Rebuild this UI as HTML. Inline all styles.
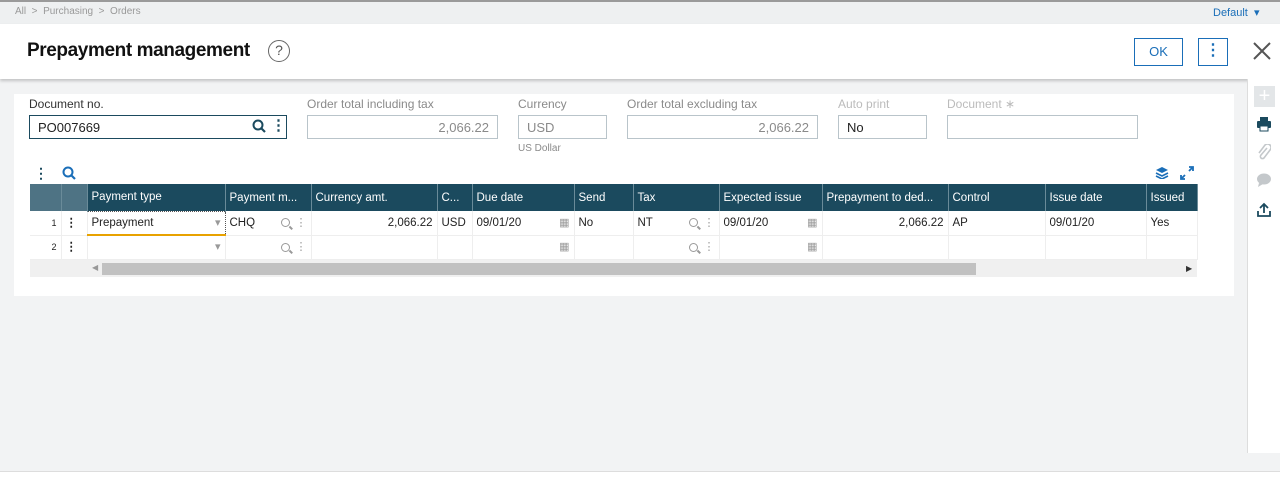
<!DOCTYPE html>
<html><head><style>
*{box-sizing:border-box;margin:0;padding:0}
body{width:1280px;height:484px;background:#f2f3f4;font-family:"Liberation Sans",sans-serif;position:relative;overflow:hidden;color:#222}
.a{position:absolute}
.lbl{font-size:12px;color:#333}
.dim{color:#8a8a8a}
.inp{border:1px solid #b9c4ca;background:#fff;height:24px;font-size:13px;padding:4px 8px}
table{border-collapse:collapse;table-layout:fixed;font-size:11.5px}
th{background:#1b4a5e;color:#fff;font-weight:normal;text-align:left;padding:0 4px;height:27px;border-right:1px solid #6a8b99;white-space:nowrap;overflow:hidden}
td{height:24px;line-height:22px;padding:0 4px;border-right:1px solid #eee;border-bottom:1px solid #eee;white-space:nowrap;background:#fff;vertical-align:middle}
.g{color:#999;float:right;font-size:11px}
.mg{display:inline-block;width:9px;height:9px;border:1.5px solid #999;border-radius:50%;position:relative;vertical-align:middle;margin-right:6px}
.mg:after{content:"";position:absolute;width:4px;height:1.5px;background:#999;right:-4px;bottom:-2px;transform:rotate(45deg)}
</style></head><body>
<div class="a" style="left:0;top:0;width:1280px;height:2px;background:#9a9a9a"></div>
<div class="a" style="left:0;top:2px;width:1280px;height:22px;background:#eef0f1"></div>
<div class="a" style="left:15px;top:6px;font-size:10px;color:#999">All &nbsp;&gt;&nbsp; Purchasing &nbsp;&gt;&nbsp; Orders</div>
<div class="a" style="left:1213px;top:6px;font-size:11px;color:#1a6eb8">Default &nbsp;▾</div>
<div class="a" style="left:0;top:24px;width:1280px;height:55px;background:#fff;box-shadow:0 2px 3px rgba(0,0,0,.2)"></div>
<div class="a" style="left:27px;top:40px;font-size:19px;font-weight:bold;color:#111;letter-spacing:-.4px">Prepayment management</div>
<div class="a" style="left:268px;top:40px;width:22px;height:22px;border:1.5px solid #666;border-radius:50%;font-size:14px;text-align:center;line-height:19px;color:#555">?</div>
<div class="a" style="left:1134px;top:38px;width:49px;height:28px;border:1.5px solid #1a6eb8;color:#1a6eb8;font-size:13px;text-align:center;line-height:25px">OK</div>
<div class="a" style="left:1198px;top:38px;width:30px;height:28px;border:1.5px solid #1a6eb8;color:#1a6eb8;font-size:16px;font-weight:bold;text-align:center;line-height:24px">⋮</div>
<svg class="a" style="left:1253px;top:42px" width="18" height="18"><path d="M1 1L17 17M17 1L1 17" stroke="#555" stroke-width="2"/></svg>
<div class="a" style="left:1247px;top:79px;width:33px;height:374px;background:#fff;border-left:1px solid #ddd"></div>
<div class="a" style="left:1254px;top:86px;width:21px;height:21px;background:#e3e6e8;color:#fff;font-size:20px;text-align:center;line-height:20px">+</div>
<svg class="a" style="left:1256px;top:116px" width="16" height="16"><rect x="4" y="1" width="8" height="4" fill="#1b4a5e"/><rect x="1" y="5" width="14" height="7" rx="1" fill="#1b4a5e"/><rect x="4" y="10" width="8" height="5" fill="#fff" stroke="#1b4a5e"/></svg>
<svg class="a" style="left:1257px;top:144px" width="14" height="16"><path d="M10 4L4 11a2 2 0 0 0 3 3l6-8a3.5 3.5 0 0 0-5-5L2 9" stroke="#c4c8cb" stroke-width="1.6" fill="none"/></svg>
<svg class="a" style="left:1256px;top:173px" width="16" height="14"><ellipse cx="8" cy="6" rx="7" ry="5.5" fill="#c4c8cb"/><path d="M3 10L2 14L7 11z" fill="#c4c8cb"/></svg>
<svg class="a" style="left:1256px;top:202px" width="16" height="16"><path d="M8 2V11M4 6L8 2L12 6M2 9V14H14V9" stroke="#1b4a5e" stroke-width="1.8" fill="none"/></svg>
<div class="a" style="left:0;top:471px;width:1280px;height:13px;background:#fff;border-top:1px solid #ddd"></div>
<div class="a" style="left:14px;top:94px;width:1220px;height:202px;background:#fff"></div>
<div class="a lbl" style="left:29px;top:97px">Document no.</div>
<div class="a inp" style="left:29px;top:115px;width:258px;border-color:#1b4a5e">PO007669</div>
<svg class="a" style="left:252px;top:119px" width="14" height="14"><circle cx="6" cy="6" r="4.5" stroke="#1b4a5e" stroke-width="2" fill="none"/><path d="M9 9L13 13" stroke="#1b4a5e" stroke-width="2.2"/></svg>
<div class="a" style="left:271px;top:116px;font-size:15px;color:#1b4a5e;font-weight:bold">⋮</div>
<div class="a lbl dim" style="left:307px;top:97px">Order total including tax</div>
<div class="a inp dim" style="left:307px;top:115px;width:191px;text-align:right">2,066.22</div>
<div class="a lbl dim" style="left:518px;top:97px">Currency</div>
<div class="a inp dim" style="left:518px;top:115px;width:89px">USD</div>
<div class="a dim" style="left:518px;top:143px;font-size:10px">US Dollar</div>
<div class="a lbl dim" style="left:627px;top:97px">Order total excluding tax</div>
<div class="a inp dim" style="left:627px;top:115px;width:191px;text-align:right">2,066.22</div>
<div class="a lbl" style="left:838px;top:97px;color:#bbb">Auto print</div>
<div class="a inp" style="left:838px;top:115px;width:89px">No</div>
<div class="a lbl" style="left:947px;top:97px;color:#bbb">Document ∗</div>
<div class="a inp" style="left:947px;top:115px;width:191px"></div>
<div class="a" style="left:34px;top:165px;font-size:14px;font-weight:bold;color:#1b4a5e">⋮</div>
<svg class="a" style="left:62px;top:166px" width="14" height="14"><circle cx="6" cy="6" r="4.5" stroke="#1a6eb8" stroke-width="2" fill="none"/><path d="M9 9L13 13" stroke="#1a6eb8" stroke-width="2.2"/></svg>
<svg class="a" style="left:1155px;top:166px" width="14" height="13"><path d="M7 1L13 4L7 7L1 4z" fill="#1a6eb8"/><path d="M1 7L7 10L13 7M1 10L7 13L13 10" stroke="#1a6eb8" stroke-width="1.6" fill="none"/></svg>
<svg class="a" style="left:1180px;top:166px" width="14" height="14"><path d="M9 1H13V5M12 2L9 5M1 9V13H5M2 12L5 9" stroke="#1a6eb8" stroke-width="1.8" fill="none"/></svg>
<table class="a" style="left:30px;top:184px;width:1167px">
<colgroup><col style="width:31px"><col style="width:26px"><col style="width:138px"><col style="width:86px"><col style="width:126px"><col style="width:35px"><col style="width:102px"><col style="width:59px"><col style="width:86px"><col style="width:103px"><col style="width:126px"><col style="width:97px"><col style="width:101px"><col style="width:51px"></colgroup>
<tr><th style="background:#4e7384"></th><th style="background:#4e7384"></th><th>Payment type</th><th>Payment m...</th><th>Currency amt.</th><th>C...</th><th>Due date</th><th>Send</th><th>Tax</th><th>Expected issue</th><th>Prepayment to ded...</th><th>Control</th><th>Issue date</th><th>Issued</th></tr>
<tr><td style="text-align:right;font-size:9px">1</td><td style="font-weight:bold">⋮</td><td style="border:1px dotted #555;border-bottom:2px solid #e8a200">Prepayment <span class="g">▾</span></td><td>CHQ <span class="g"><i class="mg"></i>⋮</span></td><td style="text-align:right">2,066.22</td><td>USD</td><td>09/01/20 <span class="g">▦</span></td><td>No</td><td>NT <span class="g"><i class="mg"></i>⋮</span></td><td>09/01/20 <span class="g">▦</span></td><td style="text-align:right">2,066.22</td><td>AP</td><td>09/01/20</td><td>Yes</td></tr>
<tr><td style="text-align:right;font-size:9px">2</td><td style="font-weight:bold">⋮</td><td><span class="g">▾</span></td><td><span class="g"><i class="mg"></i>⋮</span></td><td></td><td></td><td><span class="g">▦</span></td><td></td><td><span class="g"><i class="mg"></i>⋮</span></td><td><span class="g">▦</span></td><td></td><td></td><td></td><td></td></tr>
</table>
<div class="a" style="left:30px;top:260px;width:1167px;height:17px;background:#f0f0f0"></div>
<div class="a" style="left:102px;top:263px;width:874px;height:12px;background:#c1c1c1"></div>
<div class="a" style="left:92px;top:263px;font-size:8px;color:#999">◀</div>
<div class="a" style="left:1186px;top:264px;font-size:8px;color:#333">▶</div>
</body></html>
